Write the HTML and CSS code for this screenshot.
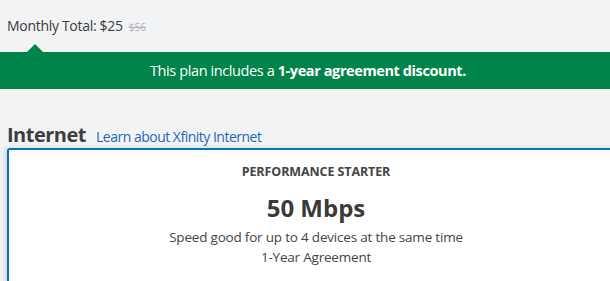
FILE: index.html
```html
<!DOCTYPE html>
<html>
<head>
<meta charset="utf-8">
<link rel="stylesheet" href="styles.css">
</head>
<body>
<div class="page">
  <div class="total">
    <span class="total-label">Monthly Total: $25</span>
    <span class="old">$56</span>
  </div>
  <div class="banner">
    <span class="notch"></span>
    <p>This plan includes a <strong>1-year agreement discount.</strong></p>
  </div>
  <div class="section-head">
    <h2>Internet</h2>
    <a href="#" class="learn">Learn about Xfinity Internet</a>
  </div>
  <div class="card">
    <div class="plan">PERFORMANCE STARTER</div>
    <div class="speed">50 Mbps</div>
    <div class="desc first">Speed good for up to 4 devices at the same time</div>
    <div class="desc">1-Year Agreement</div>
  </div>
</div>
</body>
</html>
```

FILE: styles.css
```css
html, body {
  margin: 0;
  padding: 0;
  background: #f2f3f5;
  overflow: hidden;
}
body {
  font-family: "Open Sans", "Noto Sans", sans-serif;
  color: #333;
  width: 610px;
  height: 281px;
}
.page {
  width: 610px;
}
.total {
  display: flex;
  align-items: baseline;
  gap: 6px;
  padding: 16px 0 0 7px;
  height: 28px;
}
.total-label {
  font-size: 14px;
  color: #3b3b3b;
  letter-spacing: -0.3px;
}
.old {
  font-size: 10px;
  color: #b0b3b7;
  text-decoration: line-through;
}
.banner {
  position: relative;
  margin-top: 8px;
  background: #00844a;
  height: 37px;
  display: flex;
  align-items: center;
  justify-content: center;
}
.notch {
  position: absolute;
  top: -8px;
  left: 27px;
  width: 0;
  height: 0;
  border-left: 8px solid transparent;
  border-right: 8px solid transparent;
  border-bottom: 8px solid #00844a;
}
.banner p {
  margin: 0 0 0 6px;
  color: #fff;
  font-size: 14.5px;
  letter-spacing: -0.4px;
}
.banner strong {
  font-weight: 700;
}
.section-head {
  display: flex;
  align-items: baseline;
  gap: 10px;
  padding: 32px 0 0 7px;
  height: 27px;
}
.section-head h2 {
  margin: 0;
  font-size: 20px;
  font-weight: 700;
  color: #3d3d3d;
  letter-spacing: -0.5px;
}
.learn {
  font-size: 14px;
  color: #1f69b3;
  text-decoration: none;
  letter-spacing: -0.5px;
}
.card {
  margin-left: 7px;
  width: 618px;
  height: 135px;
  background: #fff;
  border: 2px solid #0a72b6;
  border-bottom: 0;
  border-radius: 3px 3px 0 0;
  box-shadow: -2px 0 4px rgba(0,0,0,0.12);
  display: flex;
  flex-direction: column;
  align-items: center;
  padding-top: 13px;
  box-sizing: border-box;
}
.plan {
  font-size: 12.5px;
  font-weight: 700;
  color: #444;
  letter-spacing: -0.1px;
}
.speed {
  margin-top: 12px;
  font-size: 24px;
  font-weight: 700;
  color: #3a3a3a;
  line-height: 32px;
}
.desc {
  margin-top: 2px;
  font-size: 13.5px;
  color: #444;
  letter-spacing: -0.2px;
  line-height: 18px;
}
.desc.first {
  margin-top: 4px;
}
```
